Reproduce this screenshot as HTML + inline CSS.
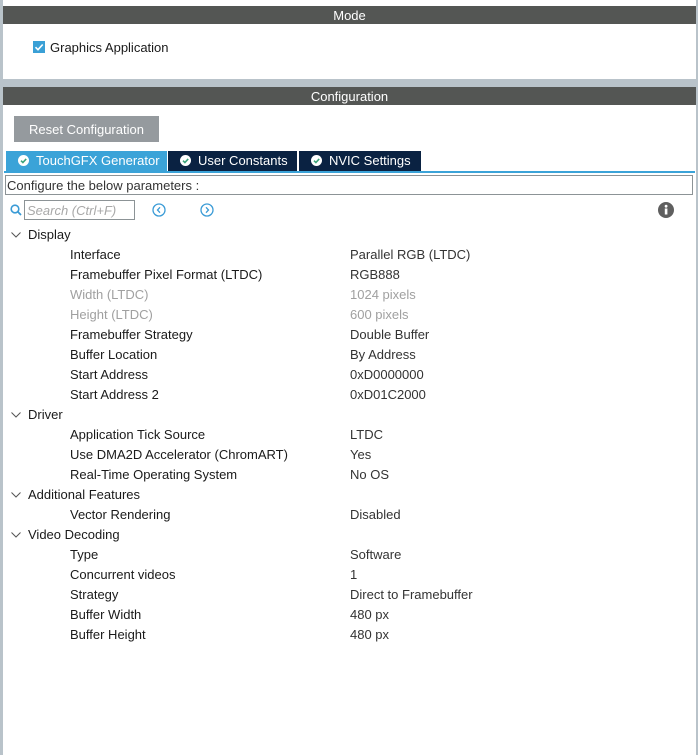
<!DOCTYPE html>
<html><head><meta charset="utf-8"><style>
*{margin:0;padding:0;box-sizing:border-box}
body{width:698px;height:755px;background:#fff;position:relative;overflow:hidden;font-family:"Liberation Sans",sans-serif;font-size:13px;color:#1a1a1a}
.abs{position:absolute}
.hdr{background:#545654;color:#fff;text-align:center;height:18px;line-height:19px;font-size:13px;left:3px;width:693px}
.tab{position:absolute;top:151px;height:20px;line-height:20px;color:#fff;font-size:13px;padding-left:12px}
.tab svg{vertical-align:-1px;margin-right:7px}
.row{position:absolute;height:20px;line-height:20px;white-space:nowrap}
.g{color:#a0a0a0}
</style></head><body>
<div class="abs" style="left:0;top:0;width:3px;height:755px;background:#b9c3ca"></div>
<div class="abs" style="left:696px;top:0;width:2px;height:755px;background:#b9c3ca"></div>
<div class="abs" style="left:3px;top:79px;width:693px;height:8px;background:#b9c3ca"></div>
<div class="abs hdr" style="top:6px">Mode</div>
<div class="abs" style="left:33px;top:41px;width:12px;height:12px;background:#3aa0d6"><svg width="12" height="12"><path d="M2.5 6.2 L5 8.7 L9.7 3.5" stroke="#fff" stroke-width="1.6" fill="none"/></svg></div>
<div class="row" style="left:50px;top:38px">Graphics Application</div>
<div class="abs hdr" style="top:87px">Configuration</div>
<div class="abs" style="left:14px;top:116px;width:145px;height:26px;background:#959a9e;color:#fff;text-align:center;line-height:27px">Reset Configuration</div>
<div class="tab" style="left:6px;width:161px;background:#3ba3d8"><svg width="11" height="11"><circle cx="5.5" cy="5.5" r="5.5" fill="#fff"/><path d="M3 5.7 L4.9 7.5 L8.2 3.9" stroke="#3ba37a" stroke-width="1.6" fill="none"/></svg>TouchGFX Generator</div>
<div class="tab" style="left:168px;width:129px;background:#0a2242"><svg width="11" height="11"><circle cx="5.5" cy="5.5" r="5.5" fill="#fff"/><path d="M3 5.7 L4.9 7.5 L8.2 3.9" stroke="#3ba37a" stroke-width="1.6" fill="none"/></svg>User Constants</div>
<div class="tab" style="left:299px;width:122px;background:#0a2242"><svg width="11" height="11"><circle cx="5.5" cy="5.5" r="5.5" fill="#fff"/><path d="M3 5.7 L4.9 7.5 L8.2 3.9" stroke="#3ba37a" stroke-width="1.6" fill="none"/></svg>NVIC Settings</div>
<div class="abs" style="left:4px;top:171px;width:691px;height:2px;background:#3ba3d8"></div>
<div class="abs" style="left:5px;top:175px;width:688px;height:20px;border:1px solid #8c9396;line-height:19px;padding-left:1px;color:#333">Configure the below parameters :</div>
<svg class="abs" style="left:10px;top:204px" width="12" height="12"><circle cx="5" cy="5" r="3.8" stroke="#3a9bd6" stroke-width="1.6" fill="none"/><path d="M7.8 7.8 L11 11" stroke="#3a9bd6" stroke-width="1.8"/></svg>
<div class="abs" style="left:24px;top:200px;width:111px;height:20px;border:1px solid #8c9396;line-height:19px;padding-left:2px;color:#a8a8a8;font-style:italic">Search (Ctrl+F)</div>
<svg class="abs" style="left:152px;top:203px" width="14" height="14"><circle cx="7" cy="7" r="6" stroke="#3a9bd6" stroke-width="1.3" fill="none"/><path d="M8 4.3 L5.5 7 L8 9.7" stroke="#3a9bd6" stroke-width="1.3" fill="none"/></svg>
<svg class="abs" style="left:200px;top:203px" width="14" height="14"><circle cx="7" cy="7" r="6" stroke="#3a9bd6" stroke-width="1.3" fill="none"/><path d="M6 4.3 L8.5 7 L6 9.7" stroke="#3a9bd6" stroke-width="1.3" fill="none"/></svg>
<svg class="abs" style="left:658px;top:202px" width="16" height="16"><circle cx="8" cy="8" r="8" fill="#5f5f5f"/><rect x="6.8" y="6.5" width="2.6" height="6" fill="#fff"/><circle cx="8.1" cy="4.2" r="1.4" fill="#fff"/></svg>

<div id="rows"></div>
<script>
var d=[["h","Display"],["Interface","Parallel RGB (LTDC)"],["Framebuffer Pixel Format (LTDC)","RGB888"],["g","Width (LTDC)","1024 pixels"],["g","Height (LTDC)","600 pixels"],["Framebuffer Strategy","Double Buffer"],["Buffer Location","By Address"],["Start Address","0xD0000000"],["Start Address 2","0xD01C2000"],["h","Driver"],["Application Tick Source","LTDC"],["Use DMA2D Accelerator (ChromART)","Yes"],["Real-Time Operating System","No OS"],["h","Additional Features"],["Vector Rendering","Disabled"],["h","Video Decoding"],["Type","Software"],["Concurrent videos","1"],["Strategy","Direct to Framebuffer"],["Buffer Width","480 px"],["Buffer Height","480 px"]];
var h="";d.forEach(function(r,i){var t=225+i*20;
if(r[0]=="h"){h+='<svg class="abs" style="left:11px;top:'+(t+7)+'px" width="10" height="6"><path d="M0.5 0.5 L5 5 L9.5 0.5" stroke="#555" stroke-width="1" fill="none"/></svg><div class="row" style="left:28px;top:'+t+'px">'+r[1]+'</div>';}
else if(r[0]=="g"){h+='<div class="row g" style="left:70px;top:'+t+'px">'+r[1]+'</div><div class="row g" style="left:350px;top:'+t+'px">'+r[2]+'</div>';}
else{h+='<div class="row" style="left:70px;top:'+t+'px">'+r[0]+'</div><div class="row" style="left:350px;top:'+t+'px;color:#333">'+r[1]+'</div>';}});
document.getElementById("rows").innerHTML=h;
</script>
</body></html>
